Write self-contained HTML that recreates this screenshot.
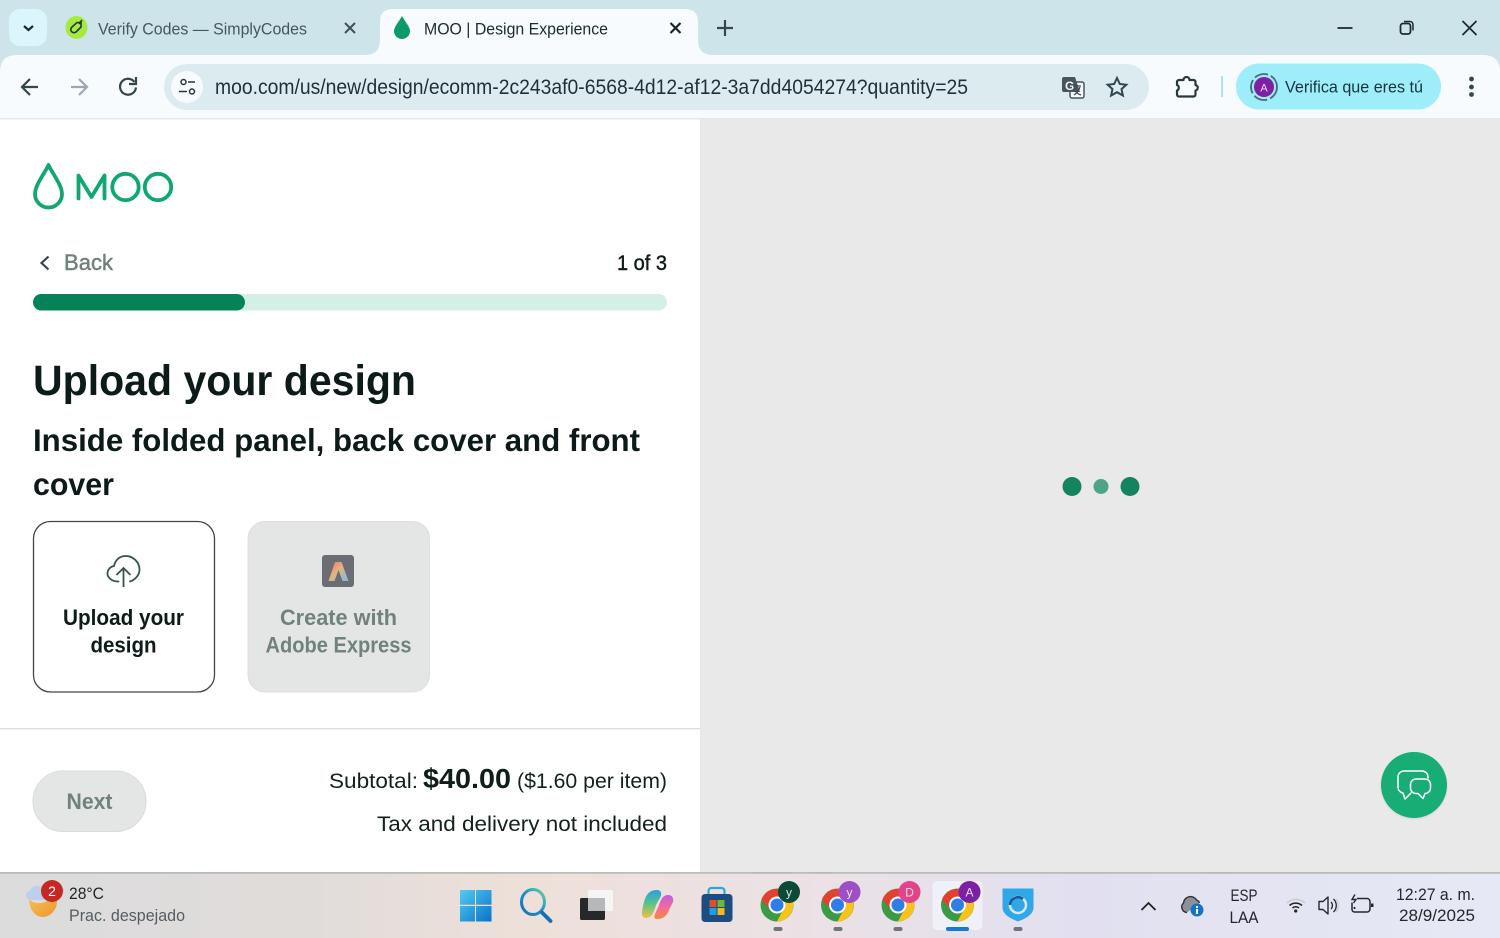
<!DOCTYPE html>
<html><head><meta charset="utf-8"><title>MOO | Design Experience</title>
<style>
html,body{margin:0;padding:0;width:1500px;height:938px;overflow:hidden;background:#fff}
svg{display:block}
text{font-family:"Liberation Sans","Noto Sans CJK SC",sans-serif}
.b{font-weight:700}
</style></head><body>
<svg xmlns="http://www.w3.org/2000/svg" width="1500" height="938" viewBox="0 0 1500 938">
<defs>
<linearGradient id="tb" x1="0" x2="1" y1="0" y2="0">
<stop offset="0" stop-color="#dcdcdd"/><stop offset=".2" stop-color="#e0dcda"/><stop offset=".36" stop-color="#eee0d9"/><stop offset=".55" stop-color="#ebe1e6"/><stop offset=".72" stop-color="#e2e0f0"/><stop offset="1" stop-color="#e6e9f5"/>
</linearGradient>
<linearGradient id="copl" x1="0" x2="0" y1="0" y2="1"><stop offset="0" stop-color="#2a9fe0"/><stop offset=".5" stop-color="#5cc48a"/><stop offset="1" stop-color="#f2c23c"/></linearGradient>
<linearGradient id="copr" x1="0" x2="0" y1="0" y2="1"><stop offset="0" stop-color="#c45ee0"/><stop offset=".5" stop-color="#f06a9a"/><stop offset="1" stop-color="#f58a3c"/></linearGradient>
<linearGradient id="win" x1="0" x2="1" y1="0" y2="1"><stop offset="0" stop-color="#4fcdf6"/><stop offset="1" stop-color="#0a72c8"/></linearGradient>
<linearGradient id="srch" x1="1" x2="0" y1="0" y2="1"><stop offset="0" stop-color="#5fd3a0"/><stop offset=".5" stop-color="#1d8ed0"/><stop offset="1" stop-color="#1670b0"/></linearGradient>
<linearGradient id="ado" x1="0" x2="1" y1="0" y2="1"><stop offset="0" stop-color="#ef6a72"/><stop offset=".45" stop-color="#e6b47c"/><stop offset="1" stop-color="#7fb8e8"/></linearGradient>
<linearGradient id="sun" x1="0" x2="1" y1="0" y2="1"><stop offset="0" stop-color="#f7c05a"/><stop offset="1" stop-color="#ee962c"/></linearGradient>
<g id="chrome">
<circle cx="0" cy="0" r="16.5" fill="#3a9a46"/>
<path d="M-15.500-5A16.500 16.500 0 0 1 14.500-7.500L0-5Z" fill="#e3402f"/>
<path d="M-15.500-5L-8 3 0-2 8-3 14.500-7.500A16.500 16.500 0 0 0-15.500-5Z" fill="#e3402f"/>
<path d="M14.500-7.500A16.500 16.500 0 0 1 0 16.500L7 3 5-6Z" fill="#f8c21c"/>
<circle cx="0" cy="0" r="8.500" fill="#fff"/><circle cx="0" cy="0" r="6.500" fill="#2f7ee8"/>
</g>
</defs>

<!-- browser chrome -->
<rect width="1500" height="120" fill="#cde5ea"/>
<path d="M0 72Q0 55 17 55H1483Q1500 55 1500 72V119H0Z" fill="#f7fbfd"/>
<rect y="118" width="1500" height="1.500" fill="#e4e8ea"/>
<rect x="9" y="9" width="38" height="37" rx="11" fill="#daf5fb"/>
<path d="M24 26l4.500 4 4.500-4" fill="none" stroke="#1a2a30" stroke-width="2.200"/>
<!-- inactive tab -->
<ellipse cx="76.500" cy="27.500" rx="11" ry="11.500" fill="#a6ea3f"/>
<path d="M72 27l5-4.500h4v4.500l-5 5a3 3 0 0 1-4-5ZM82 20l-3 4" fill="none" stroke="#26333a" stroke-width="1.600"/>
<text x="98" y="34.500" font-size="17" fill="#45585e" textLength="209" lengthAdjust="spacingAndGlyphs">Verify Codes — SimplyCodes</text>
<path d="M345 23l10 10M355 23l-10 10" stroke="#3f5056" stroke-width="2"/>
<!-- active tab -->
<path d="M365 55Q380 55 380 40V22Q380 9 393 9H685Q698 9 698 22V40Q698 55 713 55Z" fill="#f7fbfd"/>
<path d="M402 16C398 23 394 27 394 31a8 8 0 0 0 16 0C410 27 406 23 402 16Z" fill="#0d9a68"/>
<text x="424" y="34.500" font-size="17" fill="#1c2a2e" textLength="184" lengthAdjust="spacingAndGlyphs">MOO | Design Experience</text>
<path d="M670.500 23l10 10M680.500 23l-10 10" stroke="#1a2528" stroke-width="2.200"/>
<path d="M725 20v16M717 28h16" stroke="#35484e" stroke-width="2.200"/>
<!-- window controls -->
<path d="M1337.500 28h15" stroke="#1f2a2e" stroke-width="1.800"/>
<rect x="1400.500" y="23.500" width="10" height="10.500" rx="2.500" fill="none" stroke="#1f2a2e" stroke-width="1.800"/>
<path d="M1404 21.500h6a3 3 0 0 1 3 3v6" fill="none" stroke="#1f2a2e" stroke-width="1.500"/>
<path d="M1462.500 21l14 14M1476.500 21l-14 14" stroke="#1f2a2e" stroke-width="1.800"/>
<!-- nav -->
<path d="M38 87H23M30 79l-8 8 8 8" fill="none" stroke="#34474d" stroke-width="2.200"/>
<path d="M71 87h15M79 79l8 8-8 8" fill="none" stroke="#9aa9ae" stroke-width="2.200"/>
<path d="M134.500 82a8 8 0 1 0 1.500 5.500" fill="none" stroke="#34474d" stroke-width="2.200"/>
<path d="M136 77v7h-7" fill="none" stroke="#34474d" stroke-width="2.200"/>
<!-- omnibox -->
<rect x="164" y="64" width="985" height="46" rx="23" fill="#dcebf0"/>
<circle cx="187" cy="87" r="16" fill="#f7fbfd"/>
<circle cx="183.500" cy="82" r="2.500" fill="none" stroke="#25363b" stroke-width="1.500"/><path d="M188 82h7M179 91.500h8" stroke="#25363b" stroke-width="1.600"/><circle cx="192" cy="91.500" r="2.500" fill="none" stroke="#25363b" stroke-width="1.500"/>
<text x="215" y="94" font-size="21.500" fill="#1f3036" textLength="753" lengthAdjust="spacingAndGlyphs">moo.com/us/new/design/ecomm-2c243af0-6568-4d12-af12-3a7dd4054274?quantity=25</text>
<!-- translate -->
<rect x="1070" y="82" width="14" height="16" rx="2" fill="#f7fbfd" stroke="#46565b" stroke-width="1.500"/>
<path d="M1062 79a2 2 0 0 1 2-2h11l5 15h-16a2 2 0 0 1-2-2Z" fill="#46565b"/>
<text x="1065" y="90" font-size="12" class="b" fill="#f2f6f7">G</text>
<path d="M1073 86h8M1077 85v2M1080 87c-1 3-3 6-6 8M1074 88c1 3 3 6 7 7" fill="none" stroke="#3c4c52" stroke-width="1.200"/>
<path d="M1117 78l2.800 6 6.500.7-4.800 4.400 1.400 6.400-5.900-3.300-5.900 3.300 1.400-6.400-4.800-4.400 6.500-.7Z" fill="none" stroke="#33464c" stroke-width="2"/>
<!-- extensions -->
<path d="M1179 80h4.500a3 3 0 0 1 6 0h4a2 2 0 0 1 2 2v3a2.800 2.800 0 0 1 0 5.500v4a2 2 0 0 1-2 2h-14.500a2 2 0 0 1-2-2v-4a3 3 0 0 0 0-5.500v-3a2 2 0 0 1 2-2Z" fill="none" stroke="#26393f" stroke-width="2.200" stroke-linejoin="round"/>
<rect x="1221" y="76" width="2" height="21" fill="#a7e5f2"/>
<!-- profile -->
<rect x="1236" y="63.500" width="205" height="46" rx="23" fill="#9eedfb"/>
<circle cx="1264" cy="87" r="13" fill="none" stroke="#4d6a78" stroke-width="1.800" stroke-dasharray="14 3"/>
<circle cx="1264" cy="87" r="10" fill="#7c21a4"/>
<text x="1264" y="91.500" font-size="11" fill="#f2dcf7" text-anchor="middle">A</text>
<text x="1285" y="92.500" font-size="17" fill="#17333d" textLength="138" lengthAdjust="spacingAndGlyphs">Verifica que eres tú</text>
<circle cx="1471.500" cy="79" r="2.400" fill="#35474d"/><circle cx="1471.500" cy="87" r="2.400" fill="#35474d"/><circle cx="1471.500" cy="94.500" r="2.400" fill="#35474d"/>

<!-- page -->
<rect x="0" y="119.500" width="700" height="753" fill="#fff"/>
<rect x="700" y="119.500" width="800" height="753" fill="#e9e9e9"/>
<!-- logo -->
<path d="M48.500 165C45 173 35 185 35 194a13.500 13.500 0 0 0 27 0C62 185 52 173 48.500 165Z" fill="none" stroke="#10a870" stroke-width="3.800" stroke-linejoin="round"/>
<path d="M78.500 198.500V175.500L91.500 197 104.500 175.500V198.500" fill="none" stroke="#10a870" stroke-width="3.800" stroke-linecap="round" stroke-linejoin="round"/>
<circle cx="125.500" cy="187" r="13.200" fill="none" stroke="#10a870" stroke-width="3.800"/>
<circle cx="158" cy="187" r="13.200" fill="none" stroke="#10a870" stroke-width="3.800"/>
<!-- back -->
<path d="M48.500 256.500l-7 6.500 7 6.500" fill="none" stroke="#36474c" stroke-width="2.200"/>
<text x="64" y="270" font-size="22" fill="#6f8078" textLength="49" lengthAdjust="spacingAndGlyphs" style="stroke:#6f8078;stroke-width:.45">Back</text>
<text x="667" y="270" font-size="21.500" fill="#101d1b" text-anchor="end" textLength="50" lengthAdjust="spacingAndGlyphs" style="stroke:#101d1b;stroke-width:.45">1 of 3</text>
<!-- progress -->
<rect x="33" y="294" width="634" height="16.500" rx="8.250" fill="#d3efe6"/>
<rect x="33" y="294" width="212" height="16.500" rx="8.250" fill="#068259"/>
<!-- headings -->
<text x="33" y="395" font-size="43" class="b" fill="#0c1b19" textLength="383" lengthAdjust="spacingAndGlyphs">Upload your design</text>
<text x="33" y="451" font-size="31.500" class="b" fill="#0c1b19" textLength="607" lengthAdjust="spacingAndGlyphs">Inside folded panel, back cover and front</text>
<text x="33" y="495" font-size="31.500" class="b" fill="#0c1b19" textLength="81" lengthAdjust="spacingAndGlyphs">cover</text>
<!-- cards -->
<rect x="33.500" y="521.500" width="181" height="170.500" rx="17" fill="#fff" stroke="#3e4745" stroke-width="1.300"/>
<path d="M118.500 581.500C112 581.500 107.500 578 107.500 573.500C107.500 569.500 110.500 566.500 114 566C115.500 559.500 120 556 125.500 556C133 556 139.500 562 139.500 569.500C139.500 575 135.500 579.500 130 581.500" fill="none" stroke="#36544c" stroke-width="1.800" stroke-linecap="round"/>
<path d="M123.500 587V568M116.500 575l7-7 7 7" fill="none" stroke="#36544c" stroke-width="1.800"/>
<text x="123.500" y="625" font-size="22" class="b" fill="#0d1b19" text-anchor="middle" textLength="121" lengthAdjust="spacingAndGlyphs">Upload your</text>
<text x="123.500" y="652.500" font-size="22" class="b" fill="#0d1b19" text-anchor="middle" textLength="66" lengthAdjust="spacingAndGlyphs">design</text>
<rect x="248" y="521.500" width="181.500" height="170.500" rx="17" fill="#e4e6e5" stroke="#dcdfde" stroke-width="1"/>
<rect x="322" y="555" width="32" height="32" rx="3" fill="#6a6e74"/>
<path d="M335 562h6.500l7 19h-6l-4-11-4 11h-6Z" fill="url(#ado)"/>
<text x="338.500" y="625" font-size="22" class="b" fill="#70837b" text-anchor="middle" textLength="117" lengthAdjust="spacingAndGlyphs">Create with</text>
<text x="338.500" y="652.500" font-size="22" class="b" fill="#70837b" text-anchor="middle" textLength="146" lengthAdjust="spacingAndGlyphs">Adobe Express</text>
<!-- footer -->
<rect x="0" y="728" width="700" height="1.300" fill="#dadfdd"/>
<rect x="33" y="771" width="113" height="60.500" rx="30" fill="#e4e6e5" stroke="#d8dcda"/>
<text x="89.500" y="809" font-size="22" class="b" fill="#70837b" text-anchor="middle" textLength="46" lengthAdjust="spacingAndGlyphs">Next</text>
<text x="329" y="788" font-size="21.500" fill="#13211e" textLength="89" lengthAdjust="spacingAndGlyphs">Subtotal:</text>
<text x="423" y="788" font-size="28" class="b" fill="#101d1b" textLength="88" lengthAdjust="spacingAndGlyphs">$40.00</text>
<text x="517" y="788" font-size="21.500" fill="#13211e" textLength="150" lengthAdjust="spacingAndGlyphs">($1.60 per item)</text>
<text x="377" y="831" font-size="21.500" fill="#13211e" textLength="290" lengthAdjust="spacingAndGlyphs">Tax and delivery not included</text>
<!-- loader -->
<circle cx="1072" cy="486.500" r="9.500" fill="#14835f"/>
<circle cx="1101" cy="486.500" r="7.500" fill="#4fa487"/>
<circle cx="1130" cy="486.500" r="9.500" fill="#14835f"/>
<!-- chat -->
<circle cx="1414" cy="786" r="34" fill="#000" opacity=".04"/>
<circle cx="1414" cy="785" r="33" fill="#17ad74"/>
<path d="M1428 778.500V777a6 6 0 0 0-6-6H1404a6 6 0 0 0-6 6v10a6 6 0 0 0 5 6l2 6 6-6h.5" fill="none" stroke="#fff" stroke-width="1.500" stroke-linejoin="round"/>
<path d="M1416 779h9a5.500 5.500 0 0 1 5.500 5.500v3.500a5.500 5.500 0 0 1-5.500 5.500l-2 5-5-5h-2a5.500 5.500 0 0 1-5.500-5.500v-3.500a5.500 5.500 0 0 1 5.500-5.500Z" fill="none" stroke="#fff" stroke-width="1.500" stroke-linejoin="round"/>

<!-- taskbar -->
<rect y="872" width="1500" height="66" fill="url(#tb)"/>
<rect y="872" width="1500" height="1.800" fill="#b9bbbb"/>
<path d="M29 899C34 905 46 905 52 896L57 899C58 910 50 917 43 917C35 917 29 909 29 899Z" fill="url(#sun)"/>
<path d="M31 900a4.500 4.500 0 0 1-1-9a8 8 0 0 1 14-2L46 900Z" fill="#bcd0ec"/>
<circle cx="52" cy="891" r="11" fill="#c52a22"/>
<text x="52" y="896" font-size="14" fill="#fff" text-anchor="middle">2</text>
<text x="69" y="899" font-size="16.500" fill="#20262a" textLength="35" lengthAdjust="spacingAndGlyphs">28°C</text>
<text x="69" y="921" font-size="16.500" fill="#555d62" textLength="116" lengthAdjust="spacingAndGlyphs">Prac. despejado</text>
<!-- start -->
<path d="M460 890h15v14.800h-15ZM476 890h15.500v14.800H476ZM460 906h15v15.500h-15ZM476 906h15.500v15.500H476Z" fill="url(#win)"/>
<!-- search -->
<ellipse cx="533" cy="902" rx="11.500" ry="12.500" fill="none" stroke="url(#srch)" stroke-width="3"/>
<path d="M542 912.500l8.500 8.500" stroke="#1670b0" stroke-width="3.800" stroke-linecap="round"/>
<!-- task view -->
<rect x="580" y="898" width="25" height="22" rx="1.500" fill="#26282a"/>
<rect x="588" y="890" width="25" height="21" rx="1.500" fill="#f5f5f6"/>
<rect x="588" y="898" width="17" height="13" fill="#b5b7b8"/>
<!-- copilot -->
<path d="M657 890C649 890 646 895 644 902C642 910 640 918 646 918C652 918 654 912 656 905L661 896C662 892 660 890 657 890Z" fill="url(#copl)"/>
<path d="M657 919C663 919 667 916 669 910L673 902C674 898 672 895 668 895C663 895 661 899 659 905C657 911 651 919 657 919Z" fill="url(#copr)"/>
<!-- store -->
<path d="M708.500 894v-3a3 3 0 0 1 3-3h10a3 3 0 0 1 3 3v3" fill="none" stroke="#2aa6d8" stroke-width="2.200"/>
<rect x="701.500" y="894" width="31" height="28" rx="3.500" fill="#1d4c80"/>
<rect x="709.500" y="900" width="7" height="7" fill="#e8492d"/><rect x="717.500" y="900" width="7" height="7" fill="#6ebb2e"/><rect x="709.500" y="908" width="7" height="7" fill="#1ba0e0"/><rect x="717.500" y="908" width="7" height="7" fill="#f6b81c"/>
<!-- chromes -->
<rect x="932" y="880.500" width="51" height="50" rx="5" fill="#eff0f8" stroke="#e2e2ea"/>
<use href="#chrome" x="777" y="905"/><circle cx="789" cy="892" r="11" fill="#0c4a38"/><text x="789" y="896.500" font-size="12" fill="#d9e6e1" text-anchor="middle">y</text>
<use href="#chrome" x="837.500" y="905"/><circle cx="849.500" cy="892" r="11" fill="#9d50c4"/><text x="849.500" y="896.500" font-size="12" fill="#eedcf5" text-anchor="middle">y</text>
<use href="#chrome" x="898" y="905"/><circle cx="909.500" cy="892" r="11" fill="#e34388"/><text x="909.500" y="896.500" font-size="12" fill="#fbe0ec" text-anchor="middle">D</text>
<use href="#chrome" x="957.500" y="905"/><circle cx="969.500" cy="892" r="11" fill="#7c21a4"/><text x="969.500" y="896.500" font-size="12" fill="#eedcf5" text-anchor="middle">A</text>
<rect x="773.500" y="927" width="9" height="4" rx="2" fill="#70757a"/>
<rect x="833.500" y="927" width="9" height="4" rx="2" fill="#70757a"/>
<rect x="893.500" y="927" width="9" height="4" rx="2" fill="#70757a"/>
<rect x="946" y="927" width="23" height="4" rx="2" fill="#1479cf"/>
<rect x="1013.500" y="927" width="9" height="4" rx="2" fill="#70757a"/>
<!-- hotspot shield -->
<path d="M1002.500 888.500h31v19c0 7-8 11-15.500 14-7.500-3-15.500-7-15.500-14Z" fill="#2fa8ea"/>
<circle cx="1018" cy="905" r="8" fill="none" stroke="#d8e8ee" stroke-width="2.500"/>
<path d="M1010 905a8 8 0 0 1 13-6" fill="none" stroke="#165a92" stroke-width="2.500"/>
<!-- tray -->
<path d="M1141.500 910l7-7 7 7" fill="none" stroke="#1f2426" stroke-width="1.800"/>
<path d="M1187 912.500a5.500 5.500 0 0 1-3.500-9.500 7 7 0 0 1 13-3c2 .5 2.500 1.500 3 3" fill="#8c9196" stroke="#2c3135" stroke-width="1.400"/>
<circle cx="1197" cy="910" r="6.500" fill="#1473c9"/>
<rect x="1196" y="909" width="2" height="5" fill="#fff"/><rect x="1196" y="906" width="2" height="2" fill="#fff"/>
<text x="1244" y="901" font-size="16.500" fill="#23282b" text-anchor="middle" textLength="27" lengthAdjust="spacingAndGlyphs">ESP</text>
<text x="1244" y="923" font-size="16.500" fill="#23282b" text-anchor="middle" textLength="29" lengthAdjust="spacingAndGlyphs">LAA</text>
<path d="M1287 903a13 13 0 0 1 18 0" fill="none" stroke="#c8cbd0" stroke-width="1.500"/>
<path d="M1289.500 905.500a9.500 9.500 0 0 1 12.500 0M1292.500 908a5 5 0 0 1 6.500 0" fill="none" stroke="#202427" stroke-width="1.500"/>
<circle cx="1295.700" cy="911" r="1.600" fill="#202427"/>
<path d="M1319 901.500h4l5-4.500v17l-5-4.500h-4Z" fill="none" stroke="#25292c" stroke-width="1.400" stroke-linejoin="round"/>
<path d="M1331 902a5 5 0 0 1 0 7M1333.500 899a9 9 0 0 1 0 13" fill="none" stroke="#25292c" stroke-width="1.300"/>
<path d="M1336 899a11 11 0 0 1 0 13" fill="none" stroke="#c8cbd0" stroke-width="1.200"/>
<path d="M1357 898.500h10a3 3 0 0 1 3 3v7.500a3 3 0 0 1-3 3h-12.500a2.500 2.500 0 0 1-2.500-2.500v-7" fill="none" stroke="#25292c" stroke-width="1.500"/>
<path d="M1355 894.500l-3 5h4l-2.500 3.500" fill="none" stroke="#25292c" stroke-width="1.400"/>
<circle cx="1354.500" cy="908" r="1.100" fill="#25292c"/>
<rect x="1371" y="903.500" width="2.500" height="3.500" fill="#25292c"/>
<text x="1475" y="900" font-size="16.500" fill="#23282b" text-anchor="end" textLength="79" lengthAdjust="spacingAndGlyphs">12:27 a. m.</text>
<text x="1475" y="921" font-size="16.500" fill="#23282b" text-anchor="end" textLength="76" lengthAdjust="spacingAndGlyphs">28/9/2025</text>
</svg>
</body></html>
